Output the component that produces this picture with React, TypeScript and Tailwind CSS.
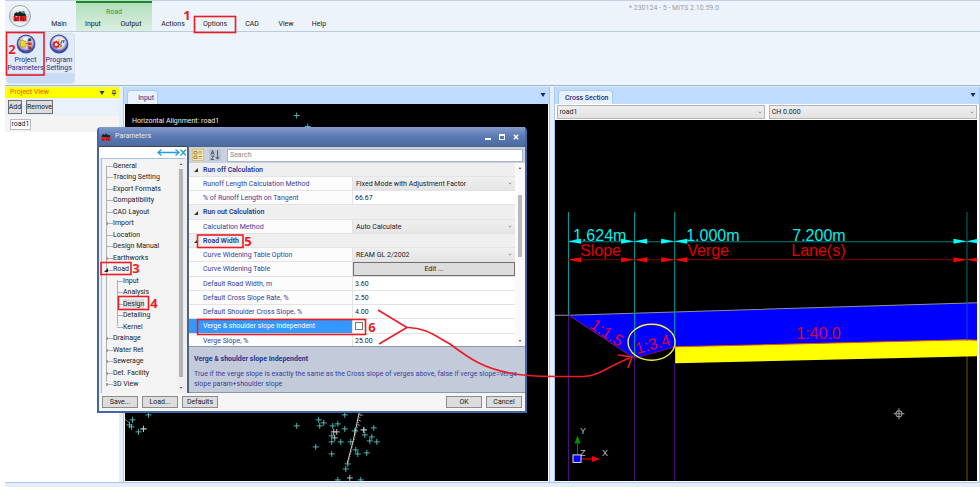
import { useState } from "react";
import { clsx } from "clsx";

type TreeItem = { label: string; level: 0 | 1; branch?: boolean };

const tree: TreeItem[] = [
    { label: "General", level: 0 },
    { label: "Tracing Setting", level: 0 },
    { label: "Export Formats", level: 0 },
    { label: "Compatibility", level: 0 },
    { label: "CAD Layout", level: 0 },
    { label: "Import", level: 0, branch: true },
    { label: "Location", level: 0 },
    { label: "Design Manual", level: 0 },
    { label: "Earthworks", level: 0, branch: true },
    { label: "Road", level: 0 },
    { label: "Input", level: 1 },
    { label: "Analysis", level: 1 },
    { label: "Design", level: 1 },
    { label: "Detailing", level: 1 },
    { label: "Kernel", level: 1 },
    { label: "Drainage", level: 0, branch: true },
    { label: "Water Ret", level: 0, branch: true },
    { label: "Sewerage", level: 0, branch: true },
    { label: "Det. Facility", level: 0, branch: true },
    { label: "3D View", level: 0, branch: true },
    { label: "Clash Analysis", level: 0 },
];

type Prop = { label: string; kind: "head" | "select" | "text" | "button" | "check"; value?: string };

const props: Prop[] = [
    { label: "Run off Calculation", kind: "head" },
    { label: "Runoff Length Calculation Method", kind: "select", value: "Fixed Mode with Adjustment Factor" },
    { label: "% of Runoff Length on Tangent", kind: "text", value: "66.67" },
    { label: "Run out Calculation", kind: "head" },
    { label: "Calculation Method", kind: "select", value: "Auto Calculate" },
    { label: "Road Width", kind: "head" },
    { label: "Curve Widening Table Option", kind: "select", value: "REAM GL 2/2002" },
    { label: "Curve Widening Table", kind: "button", value: "Edit ..." },
    { label: "Default Road Width, m", kind: "text", value: "3.60" },
    { label: "Default Cross Slope Rate, %", kind: "text", value: "2.50" },
    { label: "Default Shoulder Cross Slope, %", kind: "text", value: "4.00" },
    { label: "Verge & shoulder slope Independent", kind: "check" },
    { label: "Verge Slope, %", kind: "text", value: "25.00" },
];

// survey points around the alignment
const points = [
    [296, 115], [307, 126], [148, 414], [132, 419], [129, 424], [131, 426], [138, 431], [143, 428],
    [296, 425], [318, 419], [319, 425], [323, 422], [332, 425], [337, 423], [344, 414], [344, 428],
    [331, 435], [331, 441], [340, 441], [350, 441], [315, 446], [331, 453], [354, 430], [363, 429],
    [373, 427], [364, 434], [371, 436], [369, 440], [376, 441], [355, 449], [357, 453], [366, 452],
    [347, 463], [345, 468], [337, 479], [360, 479],
];
const greyPoints = [[333, 431], [336, 431], [334, 437], [349, 477], [143, 428], [363, 429]];

function Cross({ x, y, color }: { x: number; y: number; color: string }) {
    return <path d={`M${x - 2.5} ${y + 0.5}h6M${x + 0.5} ${y - 2.5}v6`} stroke={color} strokeWidth={0.9} />;
}

function Caret({ className, small }: { className?: string; small?: boolean }) {
    return (
        <svg viewBox="0 0 6 4" className={clsx(small ? "h-0.5 w-1" : "h-1 w-1.5", className)} fill="currentColor">
            <path d="M0.5 0h5L3 4z" />
        </svg>
    );
}

function Chevron({ className }: { className?: string }) {
    return (
        <svg viewBox="0 0 6 4" className={clsx("pointer-events-none h-[3px] w-1", className)} fill="none" stroke="#777">
            <path d="M1 0.8L3 3L5 0.8" />
        </svg>
    );
}

function Logo({ className }: { className?: string }) {
    return (
        <svg viewBox="0 0 12 10" className={className}>
            <path d="M1 5V3L3 1.5L4 2.5L6 0.8L7 2H9L11 3.5V5z" fill="#182424" />
            <path d="M6.5 1.5L9 0.5L10.5 2L9 3z" fill="#1c9c9c" />
            <path d="M0.5 9.5V5H2L3 6L4 5H5.5V9.5zM6 5H11.5V9.5H6z" fill="#d81c20" />
            <path d="M2.5 9.5V7M7 5.5V9M9 7V9.5" stroke="#5c1014" strokeWidth="0.6" />
        </svg>
    );
}

function ParametersIcon() {
    return (
        <svg viewBox="0 0 20 20" className="h-5 w-5">
            <defs>
                <radialGradient id="ringA" cx="50%" cy="40%">
                    <stop offset="0.5" stopColor="#f3f4fd" />
                    <stop offset="0.85" stopColor="#9aa0dc" />
                    <stop offset="1" stopColor="#474da4" />
                </radialGradient>
            </defs>
            <circle cx="10" cy="10" r="8.8" fill="url(#ringA)" stroke="#454a9c" strokeWidth="1.2" />
            <path d="M4.5 6h2.5l1 1.2H10V13H4.5z" fill="#f2d824" stroke="#9a8410" strokeWidth="0.6" />
            <path d="M10 9.5h2M12 5.5v8" stroke="#444" strokeWidth="0.7" />
            <rect x="12.2" y="4.5" width="3" height="2.8" fill="#333c48" />
            <rect x="12.2" y="8.4" width="3.4" height="3" fill="#dd2a22" />
            <rect x="12.2" y="12.4" width="3" height="2.8" fill="#a53025" />
        </svg>
    );
}

function SettingsIcon() {
    return (
        <svg viewBox="0 0 20 20" className="h-5 w-5">
            <circle cx="10" cy="10" r="8.8" fill="url(#ringA)" stroke="#454a9c" strokeWidth="1.2" />
            <path d="M8 4.5h4l-1 3l-2 1z" fill="#f0d46a" />
            <path d="M10 12l3-1l1 3l-4 1.5z" fill="#e6d27a" />
            <circle cx="7.2" cy="10.5" r="2.4" fill="#fff" stroke="#e0262a" strokeWidth="1.8" />
            <path d="M7.2 6.6v1.6M7.2 12.8v1.6M3.3 10.5h1.6M9.5 10.5h1.6M4.5 7.8l1 1M9 12.3l1 1M4.5 13.2l1-1M9 8.7l1-1" stroke="#e0262a" strokeWidth="1.2" />
            <path d="M12 13V8.5l1-1.8h2l-1 2.3" stroke="#4a5f80" strokeWidth="1.1" fill="none" />
        </svg>
    );
}

function Tab({ label, className }: { label: string; className: string }) {
    return (
        <button className={clsx("flex items-end justify-center pb-px text-[7px] leading-[11px] text-[#222]", className)}>
            {label}
        </button>
    );
}

function Header() {
    return (
        <header className="flex h-8 border-t border-b border-t-[#c5cfe8] border-b-[#bccbdc] bg-[#edf3fb]">
            <div className="flex w-[29px] items-center justify-center">
                <div className="flex h-[22px] w-[22px] items-center justify-center rounded-full border border-[#9a9fa8] bg-gradient-to-b from-white via-[#d4d7dc] to-[#f4f5f7]">
                    <Logo className="h-3 w-3.5" />
                </div>
            </div>
            <nav className="flex">
                <Tab label="Main" className="ml-2 w-[34px]" />
                <div className="flex w-[76px] flex-col border-t-2 border-[#14901c] bg-gradient-to-b from-[#b4dfbd] to-[#d9eee0]">
                    <div className="flex-1 pt-1 text-center text-[7px] leading-[10px] text-[#2f9a4b]">Road</div>
                    <div className="flex">
                        <Tab label="Input" className="w-[34px]" />
                        <Tab label="Output" className="w-[42px]" />
                    </div>
                </div>
                <Tab label="Actions" className="w-[42px]" />
                <Tab label="Options" className="w-[42px]" />
                <Tab label="CAD" className="w-8" />
                <Tab label="View" className="w-9" />
                <Tab label="Help" className="w-[30px]" />
            </nav>
            <div className="flex-1 pt-0.5 pl-[295px] text-[7px] leading-[11px] text-[#9b9fa5]">* 230124 - 5 - MiTS 2.10.59.0</div>
        </header>
    );
}

function Ribbon() {
    return (
        <div className="flex h-[54px] border-b border-[#9fb4cf] bg-[#edf4fc] p-px">
            <div className="flex w-[69px] flex-col rounded-sm border border-[#d2e0f0] bg-[#dfeafa]">
                <div className="flex flex-1 text-center text-[7px] leading-2 text-[#1f2f7c]">
                    <button className="flex w-[37px] flex-col items-center">
                        <ParametersIcon />
                        <span className="pt-0.5">Project</span>
                        <span>Parameters</span>
                    </button>
                    <button className="flex w-[30px] flex-col items-center">
                        <SettingsIcon />
                        <span className="pt-0.5">Program</span>
                        <span>Settings</span>
                    </button>
                </div>
                <div className="h-2.5 bg-[#c8dcf5]" />
            </div>
        </div>
    );
}

function ProjectView() {
    return (
        <aside className="flex w-[114px] shrink-0 flex-col bg-white">
            <div className="flex h-[11px] items-center bg-[#ffff00] pl-[5px] text-[7px] text-[#f0501a]">
                <span className="flex-1">Project View</span>
                <Caret className="text-[#1f3a6e]" />
                <svg viewBox="0 0 6 8" className="mr-0.5 ml-1.5 h-1.5 w-1.5" fill="none" stroke="#1f3a6e">
                    <path d="M1.5 0.5h3v4h-3zM0 4.7h6M3 5v3" />
                </svg>
            </div>
            <div className="flex gap-1 bg-[#e9f1fb] px-[3px] py-0.5 text-[7px] text-[#222]">
                <button className="h-3.5 w-3.5 border border-[#707070] bg-[#dddddd] leading-3">
                    <span className="flex justify-center">Add</span>
                </button>
                <button className="h-3.5 w-[27px] border border-[#707070] bg-[#dddddd] leading-3">
                    <span className="flex justify-center">Remove</span>
                </button>
            </div>
            <div className="flex h-4 items-center bg-[#f4f4f4] pl-[5px]">
                <button className="h-[11px] w-[21px] border border-[#bbb] bg-white text-[7px] leading-[9px] text-[#222]">road1</button>
            </div>
        </aside>
    );
}

function PanelHead({ title, className }: { title: string; className: string }) {
    return (
        <div className="flex h-[17px] items-end bg-[#bfdbff] px-[3px]">
            <button className={clsx("h-3.5 rounded-t-sm border border-b-0 border-[#a6caf5] bg-[#e8f1fd] pt-0.5 text-right text-[7px] text-[#1d2b80]", className)}>
                {title}
            </button>
            <div className="flex-1" />
            <Caret className="mb-[7px] text-[#14247c]" />
        </div>
    );
}

function InputPanel() {
    return (
        <section className="flex min-w-0 flex-1 flex-col border-x border-[#a9c8f3] bg-white">
            <PanelHead title="Input" className="w-[31px] pr-[3px]" />
            <div className="relative mx-px mb-px flex-1 bg-black">
                <svg viewBox="125 104 422 377" preserveAspectRatio="xMinYMin slice" className="absolute inset-0 h-full w-full">
                    <text x="132" y="123" fill="#eee" fontSize="7">
                        Horizontal Alignment: road1
                    </text>
                    {points.map(([x, y], i) => (
                        <Cross key={i} x={x} y={y} color="#55c4c4" />
                    ))}
                    {greyPoints.map(([x, y], i) => (
                        <Cross key={i} x={x} y={y} color="#c8d0d0" />
                    ))}
                    <path d="M359 412L353 440L347 463" stroke="#d5d5d5" fill="none" />
                    <path d="M361 412L348 463" stroke="#888" strokeDasharray="1 1.5" />
                    <path d="M358 414l5 1M357 419l4 2M356 424l4 1M355 429l3 2M125 419l5 4" stroke="#999" strokeWidth="0.8" />
                </svg>
            </div>
        </section>
    );
}

const heads = "M568 241l13-2.5v5zM634 241l-13-2.5v5zM634 241l13-2.5v5zM674 241l-13-2.5v5zM674 241l13-2.5v5zM966 241l-13-2.5v5zM966 241l13-2.5v5z";

function SectionDrawing() {
    return (
        <svg viewBox="555 120 422 361" preserveAspectRatio="xMinYMin slice" className="absolute inset-0 h-full w-full">
            <path d="M568.5 315V481M634.5 357V481M674.5 363V481" stroke="#4b1280" />
            <path d="M966.5 355V481" stroke="#665a00" />
            <path d="M569 315L980 302.5V340L966 339.5L675 346.5L634 358z" fill="#0000ff" />
            <path d="M675 346.5L966 339.5L980 340V356L675 363z" fill="#ffff00" />
            <path d="M554 315L568 315L980 302.5" stroke="#8f8f9a" fill="none" />
            <path d="M569 315L634 358L675 346.5" stroke="#70108c" fill="none" />
            <path d="M675 346.5L966 339.5L980 340" stroke="#e0501c" fill="none" />
            <path d="M568.5 212V315M634.5 212V357M674.5 212V346" stroke="#009c9c" />
            <path d="M966.5 212V302" stroke="#006e70" />
            <path d="M966.5 302V340" stroke="#0a4bff" />
            <path d="M568 241.5H980" stroke="#008080" />
            <path d="M568 259.5H980" stroke="#780000" />
            <path d={heads} fill="#00ffff" />
            <path d={heads} fill="#ff0000" transform="translate(0 18.5)" />
            <g fontFamily="Liberation Sans, Arial, sans-serif" fontSize="16">
                <g fill="#00f0f0">
                    <text x="573" y="241">1.624m</text>
                    <text x="686" y="241">1.000m</text>
                    <text x="792" y="241">7.200m</text>
                </g>
                <g fill="#e00000">
                    <text x="580" y="256">Slope</text>
                    <text x="687" y="256">Verge</text>
                    <text x="791" y="256">Lane(s)</text>
                </g>
                <g fill="#dc0030">
                    <text x="796" y="339">1:40.0</text>
                    <text transform="translate(589 327) rotate(34)">1:1.5</text>
                    <text transform="translate(637 354) rotate(-16)">1:3.4</text>
                </g>
            </g>
            <ellipse cx="651.5" cy="342" rx="23.5" ry="18" fill="none" stroke="#f5f04a" strokeWidth="1.4" />
            <path d="M893 413.5h11M898.5 408v11" stroke="#a0a0a0" />
            <circle cx="898.5" cy="413.5" r="3" fill="none" stroke="#a0a0a0" />
            <path d="M577.5 458V443" stroke="#009000" />
            <path d="M577.5 435l3 8h-6z" fill="#009000" />
            <path d="M577 458.5H593" stroke="#ff0000" />
            <path d="M600 458.5l-8-3v6z" fill="#ff0000" />
            <rect x="573" y="454.5" width="8" height="7.5" fill="#0000ff" stroke="#ddd" />
            <g fontFamily="Liberation Sans, Arial, sans-serif" fontSize="9" fill="#bbb">
                <text x="580" y="434">Y</text>
                <text x="580" y="456">Z</text>
                <text x="602" y="456">X</text>
            </g>
        </svg>
    );
}

function PanelSelect({ label, value }: { label: string; value: string }) {
    return (
        <div className="relative flex flex-1">
            <select
                aria-label={label}
                className="h-3.5 w-full appearance-none border border-[#b5b5b5] bg-gradient-to-b from-[#eeeeee] to-[#e3e3e3] pl-0.5 text-[7px] leading-3 text-[#222]"
            >
                <option>{value}</option>
            </select>
            <Chevron className="absolute top-[6px] right-[3px]" />
        </div>
    );
}

function CrossSectionPanel() {
    return (
        <section className="flex min-w-0 flex-1 flex-col border-x border-[#a9c8f3] bg-white">
            <PanelHead title="Cross Section" className="w-[55px] pr-[3px] font-medium" />
            <div className="flex gap-1 px-0.5 py-px">
                <PanelSelect label="Alignment" value="road1" />
                <PanelSelect label="Chainage" value="CH 0.000" />
            </div>
            <div className="relative mr-0.5 mb-px flex-1 bg-black">
                <SectionDrawing />
            </div>
        </section>
    );
}

function Tree() {
    const [selected, setSelected] = useState("Design");
    return (
        <div className="mx-0.5 flex min-h-0 flex-1 border-t border-l border-[#a5bede] bg-[#f4f4f4]">
            <div className="min-w-0 flex-1 overflow-hidden pt-px pl-1">
                <ul className="relative">
                    <li className="absolute top-[6px] left-0 h-[216px] border-l border-[#b0b0b0]" />
                    <li className="absolute top-[120px] left-[11px] h-[46px] border-l border-[#b0b0b0]" />
                    {tree.map(({ label, level, branch }) => (
                        <li
                            key={label}
                            className={clsx("flex items-center odd:h-3 even:h-[11px]", level === 1 && "pl-[11px]")}
                        >
                            {label === "Road" ? (
                                <svg viewBox="0 0 9 6" className="z-10 -ml-0.5 h-1.5 w-[9px]">
                                    <path d="M0 5L4 1V5z" fill="#222" />
                                    <path d="M4 3.5h5" stroke="#b0b0b0" />
                                </svg>
                            ) : (
                                <span className={clsx("h-px bg-[#b0b0b0]", level ? "w-1.5" : "w-[7px]")}>
                                    {branch && <span className="relative -top-px block h-[3px] w-0.5 bg-[#a0a0a0]" />}
                                </span>
                            )}
                            <button
                                onClick={() => setSelected(label)}
                                className={clsx(
                                    "h-[11px] text-[7px] leading-[11px] whitespace-nowrap text-[#222]",
                                    selected === label && "bg-[#dcdcdc]",
                                )}
                            >
                                {label}
                            </button>
                        </li>
                    ))}
                </ul>
            </div>
            <div className="flex w-2 flex-col items-center justify-between bg-[#efefef] py-1">
                <Caret small className="rotate-180 text-[#555]" />
                <div className="mt-1 mb-2.5 w-1 flex-1 bg-[#b4b4b4]" />
                <Caret small className="text-[#555]" />
            </div>
        </div>
    );
}

function PropertyRow({ label, kind, value, id }: Prop & { id: string }) {
    if (kind === "head") {
        return (
            <div className="flex h-3.5 items-center border-b border-[#e4e4e4] bg-[#efefef] pt-px pl-[5px] text-[7px] font-semibold text-[#2c3a90] nth-[4n]:h-[15px]">
                <svg viewBox="0 0 4 4" className="mr-[5px] h-1 w-1">
                    <path d="M0 4L4 0V4z" fill="#333" />
                </svg>
                {label}
            </div>
        );
    }
    return (
        <div className="flex h-3.5 border-b border-[#e2e2e2] bg-[#fcfcfc] text-[7px] leading-[14px] text-[#222] nth-[4n]:h-[15px]">
            <label
                htmlFor={id}
                className={clsx("flex-1 pl-3.5", kind === "check" ? "bg-[#3399ff] text-white" : "text-[#36429a]")}
            >
                {label}
            </label>
            <div className="relative flex w-[163px] border-l border-[#e2e2e2] bg-white">
                {kind === "select" && (
                    <>
                        <select
                            id={id}
                            className="h-full w-full appearance-none bg-gradient-to-b from-[#f0f0f0] to-[#e5e5e5] pl-[3px]"
                        >
                            <option>{value}</option>
                        </select>
                        <Chevron className="absolute top-[5px] right-[3px]" />
                    </>
                )}
                {kind === "text" && <input id={id} defaultValue={value} className="w-full pl-0.5" />}
                {kind === "button" && (
                    <button id={id} className="w-full border border-[#707070] bg-[#dddddd] leading-[11px]">
                        {value}
                    </button>
                )}
                {kind === "check" && (
                    <input
                        id={id}
                        type="checkbox"
                        className="mt-[3px] ml-0.5 h-2 w-2 appearance-none border border-[#777] bg-white checked:bg-[#3399ff]"
                    />
                )}
            </div>
        </div>
    );
}

function ParametersDialog() {
    const button = "h-3 w-9 border border-[#8c8c8c] bg-[#dddddd] text-[7px] leading-[10px] text-[#222]";
    return (
        <div
            role="dialog"
            aria-label="Parameters"
            className="absolute top-[127px] left-[97px] flex h-[286px] w-[430px] flex-col rounded-t-sm border-2 border-t-0 border-[#4466a2] bg-[#f5f5f5]"
        >
            <div className="flex h-[19px] shrink-0 items-center bg-gradient-to-b from-[#849cce] via-[#5b79b2] to-[#4a6ba4] pl-0.5 text-[7px] text-[#e6ecf7]">
                <Logo className="mr-1 h-2.5 w-2.5" />
                <span className="flex-1">Parameters</span>
                <button aria-label="Minimize" className="mr-2 flex h-1.5 w-1.5 items-end">
                    <span className="h-0.5 w-full bg-white" />
                </button>
                <button aria-label="Maximize" className="mr-2 h-1.5 w-1.5 border border-t-2 border-white" />
                <button aria-label="Close" className="mr-1.5">
                    <svg viewBox="0 0 6 6" className="h-1.5 w-1.5" stroke="white" strokeWidth="1.5">
                        <path d="M0.8 0.8L5.2 5.2M5.2 0.8L0.8 5.2" />
                    </svg>
                </button>
            </div>
            <div className="flex min-h-0 flex-1">
                <div className="flex w-[88px] flex-col border-t border-[#444] bg-[#e6effa]">
                    <div className="flex h-[11px] bg-white">
                        <input aria-label="Filter" className="min-w-0 flex-1 bg-white pl-1 text-[7px]" />
                        <svg viewBox="0 0 30 11" className="h-[11px] w-[30px]" fill="none" stroke="#20a0e0" strokeWidth="1.3">
                            <path d="M1 5.5H22M4.5 2.5L1 5.5L4.5 8.5M18.5 2.5L22 5.5L18.5 8.5M23.5 2.5L29 8.5M29 2.5L23.5 8.5" />
                        </svg>
                    </div>
                    <Tree />
                </div>
                <div className="flex min-w-0 flex-1 flex-col border-t border-l-2 border-[#56617a] bg-white">
                    <div className="flex h-4 shrink-0 items-center bg-[#c8d2e1] pr-0.5 pl-[3px]">
                        <button aria-label="Categorized" className="h-3 w-3 border border-[#e0c070] bg-[#fce6a8]">
                            <svg viewBox="0 0 10 10" className="h-full w-full" fill="none" stroke="#7c7350" strokeWidth="0.8">
                                <path d="M1 1.5h3v2.5H1zM1 6h3v2.5H1zM5.5 2h3.5M5.5 4h1M7.5 4h1M5.5 6.5h3.5M5.5 8.5h1M7.5 8.5h1" />
                            </svg>
                        </button>
                        <button aria-label="Sort alphabetically" className="mr-1.5 ml-[5px] h-3 w-3 bg-[#bac4d4]">
                            <svg viewBox="0 0 12 12" className="h-full w-full" fill="none" stroke="#444e5c" strokeWidth="0.9">
                                <path d="M2 5.5L3.5 1.5L5 5.5M2.5 4.2h2M2 7h3L2 10.5h3M8.5 1.5V10M6.8 8L8.5 10.2L10.2 8" />
                            </svg>
                        </button>
                        <input
                            aria-label="Search"
                            placeholder="Search"
                            className="h-[13px] min-w-0 flex-1 border border-[#a7b4c8] bg-white pl-0.5 text-[7px] placeholder:text-[#888]"
                        />
                    </div>
                    <div className="flex min-h-0 flex-1 overflow-hidden">
                        <div className="flex-1">
                            {props.map((p, i) => (
                                <PropertyRow key={p.label} id={`prop-${i}`} {...p} />
                            ))}
                        </div>
                        <div className="flex w-2.5 flex-col items-center justify-between bg-[#fafafa] py-1">
                            <Caret small className="rotate-180 text-[#555]" />
                            <div className="mt-[26px] h-[62px] w-1 bg-[#b8b8b8]" />
                            <div className="flex-1" />
                            <Caret small className="text-[#555]" />
                        </div>
                    </div>
                    <div className="h-[47px] shrink-0 border-y border-[#8c98ac] bg-[#c3cbda] px-[5px] pt-[7px] text-[7px] leading-[10px] text-[#36429a]">
                        <div className="mb-[5px] font-bold text-[#27358c]">Verge &amp; shoulder slope Independent</div>
                        <p>
                            True if the verge slope is exactly the same as the Cross slope of verges above, false if verge slope=verge
                            slope param+shoulder slope
                        </p>
                    </div>
                </div>
            </div>
            <div className="flex h-[18px] shrink-0 items-center gap-1 px-[3px]">
                <button className={button}>Save...</button>
                <button className={button}>Load...</button>
                <button className={button}>Defaults</button>
                <div className="flex-1" />
                <button className={button}>OK</button>
                <button className={button}>Cancel</button>
            </div>
        </div>
    );
}

// red mark-up drawn over the windows: numbered steps, frames and the arrow
function Markup() {
    return (
        <svg viewBox="0 0 980 487" className="pointer-events-none absolute top-0 left-0 h-[487px] w-[980px]">
            <g fill="none" stroke="#ea1c24" strokeWidth="1.6">
                <rect x="194.5" y="16.5" width="41" height="16" />
                <rect x="6.5" y="32.5" width="37.5" height="42.5" />
                <rect x="101" y="262.5" width="30" height="12" />
                <rect x="118.5" y="296.5" width="30" height="13" />
                <rect x="197.5" y="235" width="45.5" height="12.5" />
                <rect x="197.5" y="319.5" width="168" height="15" />
                <path d="M378 310L407 327.5L379 344" />
                <path d="M407 327.5C425 327 437 337 450 344C470 359 484 369 515 374C530 377 560 376.5 583 376.5C600 376 608 366 630 358" />
                <path d="M618 355L632 357L628 368" />
            </g>
            <g fill="#ea1c24" fontSize="13" fontWeight="700" textAnchor="middle" fontFamily="Open Sans, sans-serif">
                <text x="187" y="20">1</text>
                <text x="12" y="54">2</text>
                <text x="136" y="273">3</text>
                <text x="154" y="308">4</text>
                <text x="248" y="246">5</text>
                <text x="372" y="332">6</text>
            </g>
        </svg>
    );
}

export default function App() {
    return (
        <div className="relative flex min-h-screen flex-col overflow-hidden bg-white pl-[5px] font-[Roboto,'Noto_Sans',sans-serif]">
            <Header />
            <Ribbon />
            <main className="flex flex-1 gap-1 bg-[#e4eefb] pt-px">
                <ProjectView />
                <InputPanel />
                <CrossSectionPanel />
            </main>
            <footer className="h-[5px] border-t border-[#a9c8f3] bg-[#e4eefb]" />
            <ParametersDialog />
            <Markup />
        </div>
    );
}
